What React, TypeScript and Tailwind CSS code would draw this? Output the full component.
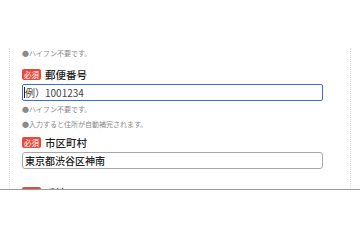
export default function App() {
  const font = { fontFamily: '"Noto Sans CJK JP", "Noto Sans", sans-serif' };
  return (
    <div className="w-[360px] h-[240px] bg-white overflow-hidden" style={font}>
      <div className="h-[190px] border-b border-[#9a9a9a] overflow-hidden">
        <div className="mx-[9px] mt-[48px] h-[200px] border-l border-r border-dotted border-[#d8d8d8] pl-[12px] pr-[28px]">
          <p className="h-[10px] leading-[10px] text-[7px] text-[#8a8a8a]">●ハイフン不要です。</p>

          <div className="mt-[11px] h-[11px] flex items-center gap-[4px]">
            <span className="h-[11px] px-[2px] rounded-[2px] bg-[#e9483b] text-white text-[7.5px] leading-[11px]">必須</span>
            <span className="text-[10.5px] font-medium text-[#222] leading-[11px]">郵便番号</span>
          </div>
          <div className="mt-[4px] h-[17px] w-[301px] border-[1.5px] border-[#3a6ed6] rounded-[2px] flex items-center pl-[1px] text-[10px] text-[#444]">
            <span className="border-l border-[#222] leading-[11px]">例）1001234</span>
          </div>

          <p className="mt-[3px] h-[10px] leading-[10px] text-[7px] text-[#8a8a8a]">●ハイフン不要です。</p>
          <p className="mt-[5px] h-[10px] leading-[10px] text-[7px] text-[#8a8a8a]">●入力すると住所が自動補完されます。</p>

          <div className="mt-[8px] h-[11px] flex items-center gap-[4px]">
            <span className="h-[11px] px-[2px] rounded-[2px] bg-[#e9483b] text-white text-[7.5px] leading-[11px]">必須</span>
            <span className="text-[10.5px] font-medium text-[#222] leading-[11px]">市区町村</span>
          </div>
          <div className="mt-[4px] h-[17px] w-[301px] border border-[#a8a8a8] rounded-[3px] flex items-center pl-[2px] text-[10px] font-medium text-[#222]">
            東京都渋谷区神南
          </div>

          <div className="mt-[18px] h-[11px] flex items-center gap-[4px]">
            <span className="h-[11px] px-[2px] rounded-[2px] bg-[#e9483b] text-white text-[7.5px] leading-[11px]">必須</span>
            <span className="text-[10.5px] font-medium text-[#222] leading-[11px]">番地</span>
          </div>
        </div>
      </div>
    </div>
  );
}
